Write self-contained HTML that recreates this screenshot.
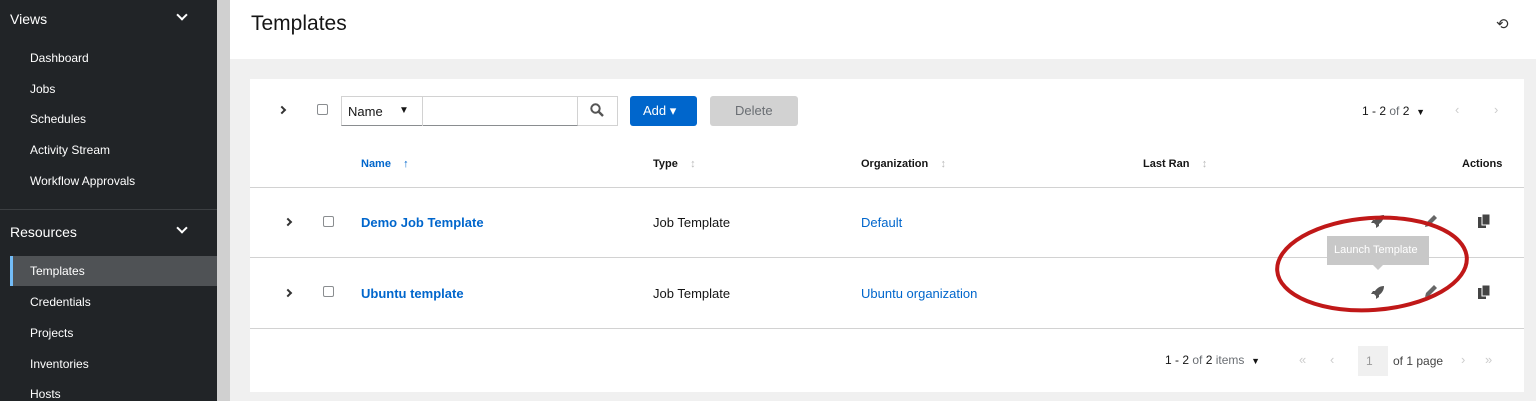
<!DOCTYPE html><html><head><style>
*{box-sizing:border-box;margin:0;padding:0}
body{width:1536px;height:401px;overflow:hidden;background:#f0f0f0;font-family:"Liberation Sans",sans-serif;position:relative}
.sb{position:absolute;left:0;top:0;width:217px;height:401px;background:#212427;color:#fff}
.strip{position:absolute;left:217px;top:0;width:13px;height:401px;background:#d0d0d0}
.sb .h{position:absolute;left:10px;font-size:14px}
.sb .i{position:absolute;left:30px;font-size:12px}
.chev{position:absolute;left:178px;width:8px;height:8px;border-right:2.5px solid #fff;border-bottom:2.5px solid #fff;transform:rotate(45deg)}
.a{position:absolute}
.hdr{position:absolute;left:230px;top:0;width:1306px;height:59px;background:#fff}
.card{position:absolute;left:250px;top:79px;width:1274px;height:313px;background:#fff}
.t{position:absolute;font-size:13px;color:#151515}
.blue{color:#0066cc}
.line{position:absolute;left:250px;width:1274px;height:1px;background:#d2d2d2}
.cb{position:absolute;width:11px;height:11px;border:1px solid #8a8d90;border-radius:2px;background:#fff}
.arr{position:absolute;width:6px;height:6px;border-right:2px solid #333;border-top:2px solid #333;transform:rotate(45deg)}
</style></head><body>
<div class="sb">
<div class="h" style="top:11px">Views</div><div class="chev" style="top:11px"></div>
<div class="i" style="top:51px">Dashboard</div>
<div class="i" style="top:82px">Jobs</div>
<div class="i" style="top:112px">Schedules</div>
<div class="i" style="top:143px">Activity Stream</div>
<div class="i" style="top:174px">Workflow Approvals</div>
<div class="a" style="left:0;top:209px;width:217px;height:1px;background:#3c3f42"></div>
<div class="h" style="top:224px">Resources</div><div class="chev" style="top:224px"></div>
<div class="a" style="left:10px;top:256px;width:207px;height:30px;background:#4f5255;border-left:3px solid #73bcf7"></div>
<div class="i" style="top:264px">Templates</div>
<div class="i" style="top:295px">Credentials</div>
<div class="i" style="top:326px">Projects</div>
<div class="i" style="top:357px">Inventories</div>
<div class="i" style="top:387px">Hosts</div>
</div>
<div class="strip"></div>
<div class="hdr"><div class="a" style="left:21px;top:12px;font-size:21px;color:#151515">Templates</div>
<div class="a" style="left:1266px;top:15px;font-size:15px;color:#333">⟲</div></div>
<div class="card"></div>
<div class="arr" style="left:279px;top:107px"></div>
<div class="cb" style="left:317px;top:104px"></div>
<div class="a" style="left:341px;top:96px;width:237px;height:30px;border:1px solid #d2d2d2;border-bottom-color:#8a8d90"></div>
<div class="a" style="left:422px;top:96px;width:1px;height:30px;background:#d2d2d2"></div>
<div class="t" style="left:348px;top:104px">Name</div>
<div class="t" style="left:399px;top:105px;font-size:10px">▼</div>
<div class="a" style="left:578px;top:96px;width:40px;height:30px;border:1px solid #d2d2d2;border-left:0"></div>
<svg class="a" style="left:590px;top:103px" width="14" height="14" viewBox="0 0 14 14"><circle cx="5.5" cy="5.5" r="4.2" fill="none" stroke="#555" stroke-width="2"/><path d="M8.5 8.5L13 13" stroke="#555" stroke-width="2.4"/></svg>
<div class="a" style="left:630px;top:96px;width:67px;height:30px;background:#0066cc;border-radius:3px;color:#fff;font-size:13px;padding:7px 0 0 13px">Add ▾</div>
<div class="a" style="left:710px;top:96px;width:88px;height:30px;background:#d2d2d2;border-radius:3px;color:#6a6e73;font-size:13px;padding:7px 0 0 25px">Delete</div>
<div class="t" style="left:1362px;top:104px;font-size:12px">1 - 2 <span style="color:#6a6e73">of</span> 2 &nbsp;<span style="font-size:9px">▼</span></div>
<div class="t" style="left:1455px;top:102px;color:#ccc">‹</div><div class="t" style="left:1494px;top:102px;color:#ccc">›</div>
<div class="t blue" style="left:361px;top:158px;font-size:11px;font-weight:bold">Name &nbsp;&nbsp;&nbsp;↑</div>
<div class="t" style="left:653px;top:158px;font-size:11px;font-weight:bold">Type &nbsp;&nbsp;&nbsp;<span style="color:#bbb;font-weight:normal">↕</span></div>
<div class="t" style="left:861px;top:158px;font-size:11px;font-weight:bold">Organization &nbsp;&nbsp;&nbsp;<span style="color:#bbb;font-weight:normal">↕</span></div>
<div class="t" style="left:1143px;top:158px;font-size:11px;font-weight:bold">Last Ran &nbsp;&nbsp;&nbsp;<span style="color:#bbb;font-weight:normal">↕</span></div>
<div class="t" style="left:1462px;top:158px;font-size:11px;font-weight:bold">Actions</div>
<div class="line" style="top:187px"></div><div class="line" style="top:257px"></div><div class="line" style="top:328px"></div>
<div class="arr" style="left:285px;top:219px"></div><div class="cb" style="left:323px;top:216px"></div>
<div class="t blue" style="left:361px;top:215px;font-weight:bold">Demo Job Template</div>
<div class="t" style="left:653px;top:215px">Job Template</div>
<div class="t blue" style="left:861px;top:215px">Default</div>
<div class="arr" style="left:285px;top:290px"></div><div class="cb" style="left:323px;top:286px"></div>
<div class="t blue" style="left:361px;top:286px;font-weight:bold">Ubuntu template</div>
<div class="t" style="left:653px;top:286px">Job Template</div>
<div class="t blue" style="left:861px;top:286px">Ubuntu organization</div>
<svg class="a" style="left:1371px;top:214px" width="14" height="14" viewBox="0 0 14 14"><path d="M13 1C9 1 6 3 4 6L2 6L0 9L3 9L5 11L5 14L8 12L8 10C11 8 13 5 13 1Z" fill="#555"/></svg>
<svg class="a" style="left:1371px;top:285px" width="14" height="14" viewBox="0 0 14 14"><path d="M13 1C9 1 6 3 4 6L2 6L0 9L3 9L5 11L5 14L8 12L8 10C11 8 13 5 13 1Z" fill="#555"/></svg>
<svg class="a" style="left:1424px;top:214px" width="14" height="14" viewBox="0 0 14 14"><path d="M1 13L2 9L10 1L13 4L5 12Z" fill="#666"/></svg>
<svg class="a" style="left:1424px;top:284px" width="14" height="14" viewBox="0 0 14 14"><path d="M1 13L2 9L10 1L13 4L5 12Z" fill="#666"/></svg>
<svg class="a" style="left:1478px;top:214px" width="13" height="14" viewBox="0 0 13 14"><rect x="0" y="3" width="8" height="11" fill="#444"/><rect x="4" y="0" width="8" height="11" fill="#444" stroke="#fff"/></svg>
<svg class="a" style="left:1478px;top:285px" width="13" height="14" viewBox="0 0 13 14"><rect x="0" y="3" width="8" height="11" fill="#444"/><rect x="4" y="0" width="8" height="11" fill="#444" stroke="#fff"/></svg>
<div class="a" style="left:1327px;top:236px;width:102px;height:29px;background:#c8c8c8;color:#fff;font-size:11px;padding:8px 0 0 7px">Launch Template</div>
<div class="a" style="left:1373px;top:265px;width:0;height:0;border-left:5px solid transparent;border-right:5px solid transparent;border-top:5px solid #c8c8c8"></div>
<svg class="a" style="left:1270px;top:210px" width="205" height="110"><ellipse cx="102" cy="54" rx="95" ry="46" fill="none" stroke="#c01818" stroke-width="4" transform="rotate(-4 102 54)"/></svg>
<div class="t" style="left:1165px;top:353px;font-size:12px">1 - 2 <span style="color:#6a6e73">of</span> 2 <span style="color:#6a6e73">items</span> &nbsp;<span style="font-size:9px">▼</span></div>
<div class="t" style="left:1299px;top:352px;color:#ccc">«</div><div class="t" style="left:1330px;top:352px;color:#ccc">‹</div>
<div class="a" style="left:1358px;top:346px;width:30px;height:30px;background:#f0f0f0;color:#999;font-size:12px;padding:8px 0 0 8px">1</div>
<div class="t" style="left:1393px;top:354px;font-size:12px;color:#444">of 1 page</div>
<div class="t" style="left:1461px;top:352px;color:#ccc">›</div><div class="t" style="left:1485px;top:352px;color:#ccc">»</div>
</body></html>
